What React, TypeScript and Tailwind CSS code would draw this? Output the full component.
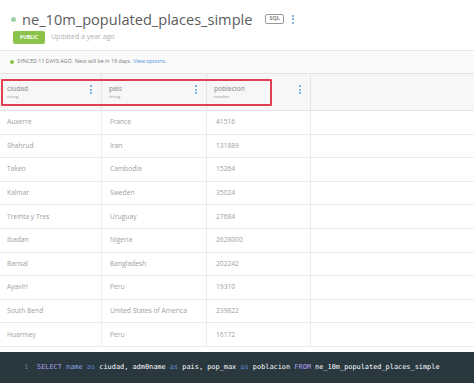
const rows = [
  { ciudad: 'Auxerre', pais: 'France', poblacion: '41516' },
  { ciudad: 'Shahrud', pais: 'Iran', poblacion: '131889' },
  { ciudad: 'Takeo', pais: 'Cambodia', poblacion: '15264' },
  { ciudad: 'Kalmar', pais: 'Sweden', poblacion: '35024' },
  { ciudad: 'Treinta y Tres', pais: 'Uruguay', poblacion: '27684' },
  { ciudad: 'Ibadan', pais: 'Nigeria', poblacion: '2628000' },
  { ciudad: 'Barisal', pais: 'Bangladesh', poblacion: '202242' },
  { ciudad: 'Ayaviri', pais: 'Peru', poblacion: '19310' },
  { ciudad: 'South Bend', pais: 'United States of America', poblacion: '239822' },
  { ciudad: 'Huarmey', pais: 'Peru', poblacion: '16172' },
];

const columns = [
  { name: 'ciudad', type: 'string', w: 'w-[102px]' },
  { name: 'pais', type: 'string', w: 'w-[105px]' },
  { name: 'poblacion', type: 'number', w: 'w-[104px]' },
];

function Kebab() {
  return (
    <span className="flex flex-col gap-[1.5px]">
      <span className="w-[2px] h-[2px] rounded-full bg-[#5a9ad8]" />
      <span className="w-[2px] h-[2px] rounded-full bg-[#5a9ad8]" />
      <span className="w-[2px] h-[2px] rounded-full bg-[#5a9ad8]" />
    </span>
  );
}

export default function App() {
  return (
    <div className="w-[474px] h-[383px] bg-white overflow-hidden flex flex-col font-['Open_Sans',sans-serif]">

      {/* Title */}
      <div className="h-[50px] pl-[11px] pt-[9px]">
        <div className="flex items-center h-[20px]">
          <span className="w-[5px] h-[5px] rounded-full bg-[#9fd3a8] mr-[6px]" />
          <span className="text-[14.6px] leading-none text-[#5c5c5c]">ne_10m_populated_places_simple</span>
          <span className="ml-[13px] border border-[#999] rounded-[2px] text-[5.5px] leading-none font-bold text-[#888] px-[3px] py-[1.5px]">SQL</span>
          <span className="ml-[8px]"><Kebab /></span>
        </div>
        <div className="flex items-center mt-[2px] ml-[2px]">
          <span className="bg-[#8bc34a] text-white text-[5px] font-bold leading-none w-[32px] h-[13px] flex items-center justify-center rounded-[2px]">PUBLIC</span>
          <span className="ml-[6px] text-[7px] text-[#b0b0b0]">Updated a year ago</span>
        </div>
      </div>

      {/* Sync bar */}
      <div className="h-[23px] border-t border-[#e6e6e6] bg-[#fafafa] flex items-center pl-[10px]">
        <span className="w-[4px] h-[4px] rounded-full bg-[#8bc34a] mr-[3px]" />
        <span className="text-[5.3px] text-[#777] uppercase">Synced 11 days ago.</span>
        <span className="text-[5.3px] text-[#777] ml-[2px]">Next will be in 19 days.</span>
        <span className="text-[5.3px] text-[#4a90d9] ml-[2px]">View options.</span>
      </div>

      {/* Table header */}
      <div className="relative h-[38px] border-t border-b border-[#e3e3e3] bg-[#f7f7f7] flex">
        {columns.map((c) => (
          <div key={c.name} className={`${c.w} border-r border-[#e6e6e6] flex justify-between items-start pl-[7px] pr-[9px] pt-[10px]`}>
            <div className="flex flex-col">
              <span className="text-[6.5px] leading-[9px] font-semibold text-[#a0a0a0]">{c.name}</span>
              <span className="text-[4px] leading-[8px] text-[#b0b0b0] font-semibold">{c.type}</span>
            </div>
            <div className="pt-[1px]"><Kebab /></div>
          </div>
        ))}
        <div className="flex-1" />
        <div className="absolute left-[1px] top-[5px] w-[271px] h-[27px] border-2 border-[#e0404f] rounded-[1px]" />
      </div>

      {/* Rows */}
      <div className="flex-1">
        {rows.map((r) => (
          <div key={r.ciudad} className="h-[23.6px] flex border-b border-[#ececec] text-[6.7px] text-[#a0a0a0]">
            <div className="w-[102px] border-r border-[#eeeeee] flex items-center pl-[7px]">{r.ciudad}</div>
            <div className="w-[105px] border-r border-[#eeeeee] flex items-center pl-[8px]">{r.pais}</div>
            <div className="w-[104px] border-r border-[#eeeeee] flex items-center pl-[9px]">{r.poblacion}</div>
            <div className="flex-1" />
          </div>
        ))}
      </div>

      {/* SQL editor */}
      <div className="h-[31px] shrink-0 bg-[#29383f] flex items-center pl-[24px] font-['DejaVu_Sans_Mono',monospace] text-[6.9px] leading-none whitespace-nowrap">
        <span className="text-[#6b7a80] w-[13px]">1</span>
        <span className="text-[#a99cf0]">SELECT</span>
        <span className="text-white">&nbsp;</span>
        <span className="text-[#8aa8e8]">name</span>
        <span className="text-[#5c8fd6]">&nbsp;as&nbsp;</span>
        <span className="text-white">ciudad, adm0name</span>
        <span className="text-[#5c8fd6]">&nbsp;as&nbsp;</span>
        <span className="text-white">pais, pop_max</span>
        <span className="text-[#5c8fd6]">&nbsp;as&nbsp;</span>
        <span className="text-white">poblacion&nbsp;</span>
        <span className="text-[#a99cf0]">FROM</span>
        <span className="text-white">&nbsp;ne_10m_populated_places_simple</span>
      </div>
    </div>
  );
}
